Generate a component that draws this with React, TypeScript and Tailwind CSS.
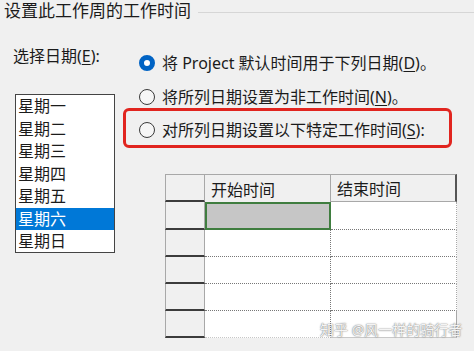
import React from "react";

function Radio({ checked }: { checked?: boolean }) {
  return checked ? (
    <span className="block w-[16px] h-[16px] rounded-full border-[5px] border-[#0063c4] bg-white shrink-0" />
  ) : (
    <span className="block w-[16px] h-[16px] rounded-full border border-[#3a3a3a] bg-[#f6f6f6] shrink-0" />
  );
}

const days = ["星期一", "星期二", "星期三", "星期四", "星期五", "星期六", "星期日"];

function Row({ h, children }: { h: string; children: React.ReactNode }) {
  return <div className={"flex " + h}>{children}</div>;
}

export default function App() {
  return (
    <div className="w-[474px] h-[351px] bg-[#f0f0f0] relative overflow-hidden text-[#1b1b1b] font-['Noto_Sans','Noto_Sans_CJK_SC',sans-serif]">
      <div className="flex items-center h-[22px] pl-[4px]">
        <span className="text-[17px] leading-[22px] whitespace-nowrap">设置此工作周的工作时间</span>
        <div className="flex-1 ml-[7px] mt-[2px] border-t border-[#d6d6d6]" />
      </div>
      <div className="flex">
        <div className="w-[110px] ml-[13px] shrink-0">
          <div className="mt-[23px] h-[22px] leading-[22px] text-[16px] whitespace-nowrap">
            选择日期(<span className="underline underline-offset-2">E</span>):
          </div>
          <div className="mt-[27px] ml-[2px] w-[100px] h-[159px] border border-[#444] bg-white">
            {days.map((d, i) => (
              <div
                key={d}
                className={
                  i === 5
                    ? "h-[22.5px] leading-[22.5px] pl-[2px] text-[16px] bg-[#0078d7] text-white"
                    : "h-[22.5px] leading-[22.5px] pl-[2px] text-[16px]"
                }
              >
                {d}
              </div>
            ))}
          </div>
        </div>
        <div className="w-[351px] shrink-0 text-[16px]">
          <div className="mt-[30px] h-[22px] flex items-center pl-[16px] gap-[7px] whitespace-nowrap">
            <Radio checked />
            <span className="leading-[22px]">
              将 Project 默认时间用于下列日期(<span className="underline underline-offset-2">D</span>)。
            </span>
          </div>
          <div className="mt-[12px] h-[22px] flex items-center pl-[16px] gap-[7px] whitespace-nowrap">
            <Radio />
            <span className="leading-[22px]">
              将所列日期设置为非工作时间(<span className="underline underline-offset-2">N</span>)。
            </span>
          </div>
          <div className="w-[329px] h-[40px] border-[3px] border-[#e1251f] rounded-[6px] flex items-center pl-[13px] pt-[4px] gap-[7px] whitespace-nowrap">
            <Radio />
            <span className="leading-[22px]">
              对所列日期设置以下特定工作时间(<span className="underline underline-offset-2">S</span>):
            </span>
          </div>
          <div className="mt-[26px] ml-[42px] w-[292px] flex flex-col">
            <Row h="h-[28px]">
              <div className="w-[40px] shrink-0 bg-[#f0f0f0] border-t border-l border-r border-[#a8a8a8] border-b-2 border-b-[#3c3c3c]" />
              <div className="w-[126px] shrink-0 bg-[#f0f0f0] border-t border-r border-[#a8a8a8] flex items-end pl-[6px] leading-[22px] pb-[1px]">开始时间</div>
              <div className="w-[126px] shrink-0 bg-[#f0f0f0] border-t border-[#a8a8a8] border-r-2 border-r-[#555] border-b border-b-[#a8a8a8] flex items-end pl-[6px] leading-[22px] pb-[1px]">结束时间</div>
            </Row>
            <Row h="h-[28px]">
              <div className="w-[40px] shrink-0 bg-[#f0f0f0] border-l border-r border-[#a8a8a8] border-b-2 border-b-[#3c3c3c]" />
              <div className="w-[126px] shrink-0 bg-[#c6c6c6] border-2 border-[#3f7d3f]" />
              <div className="w-[126px] shrink-0 bg-white border-r border-r-[#a8a8a8] border-b border-dotted border-b-[#777]" />
            </Row>
            {[0, 1, 2, 3].map((r) => (
              <Row key={r} h="h-[27px]">
                <div className="w-[40px] shrink-0 bg-[#f0f0f0] border-l border-r border-[#a8a8a8] border-b-2 border-b-[#3c3c3c]" />
                <div
                  className={
                    r === 3
                      ? "w-[126px] shrink-0 bg-white border-r border-dotted border-r-[#777] border-b border-b-[#c8c8c8]"
                      : "w-[126px] shrink-0 bg-white border-r border-dotted border-r-[#777] border-b border-b-[#777]"
                  }
                />
                <div
                  className={
                    r === 3
                      ? "w-[126px] shrink-0 bg-white border-r border-r-[#a8a8a8] border-b border-b-[#c8c8c8]"
                      : "w-[126px] shrink-0 bg-white border-r border-r-[#a8a8a8] border-b border-dotted border-b-[#777]"
                  }
                />
              </Row>
            ))}
          </div>
        </div>
      </div>
      <div className="absolute left-[320px] top-[320px] text-[14px] leading-[20px] text-[#f4f4f4] whitespace-nowrap [text-shadow:0_0_1px_#777,0_0_2px_#999]">
        知乎 @风一样的骑行者
      </div>
    </div>
  );
}
